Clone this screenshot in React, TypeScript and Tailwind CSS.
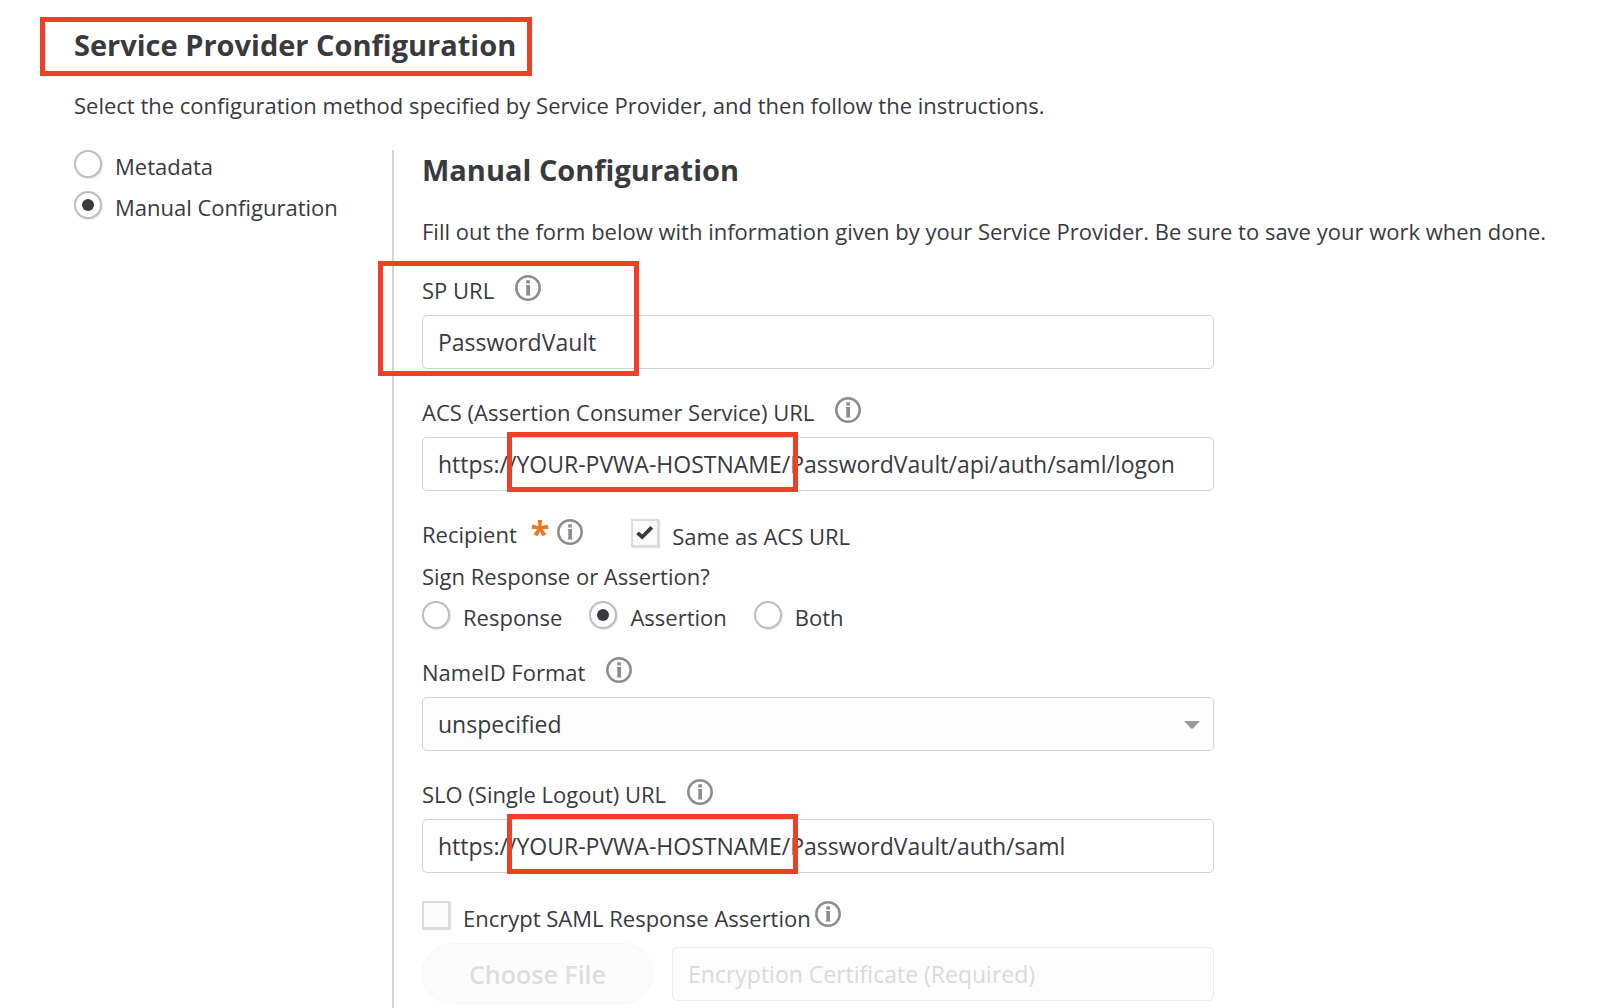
import React, { ReactNode } from "react";

function InfoButton({ label }: { label: string }) {
  return (
    <button type="button" aria-label={label} className="block size-[26px] shrink-0">
      <svg viewBox="0 0 26 26" className="size-full" aria-hidden="true">
        <circle cx="13" cy="13" r="11.7" fill="none" stroke="#8c8c8c" strokeWidth="2.500" />
        <rect x="11.2" y="5.2" width="3.8" height="3.4" rx="0.6" fill="#8c8c8c" />
        <path d="M10.8 10.1h4.200V19.600h.5v1H10.800v-1h.5v-8.500h-.5z" fill="#8c8c8c" />
      </svg>
    </button>
  );
}

function Radio({ name, label, defaultChecked }: { name: string; label: string; defaultChecked?: boolean }) {
  return (
    <label className="flex items-start gap-[13px]">
      <span className="relative block size-7 shrink-0">
        <input
          type="radio"
          name={name}
          defaultChecked={defaultChecked}
          className="peer block size-7 appearance-none rounded-full border-2 border-[#bdbdbd] bg-white shadow-[1px_1px_1px_rgba(0,0,0,0.1)]"
        />
        <span className="pointer-events-none absolute inset-2 hidden rounded-full bg-[#383a40] peer-checked:block" />
      </span>
      <span className="pt-px">{label}</span>
    </label>
  );
}

function Checkbox({ label, defaultChecked }: { label: string; defaultChecked?: boolean }) {
  return (
    <label className="flex items-start gap-[13px]">
      <span className="relative block size-7 shrink-0">
        <input
          type="checkbox"
          defaultChecked={defaultChecked}
          className="peer block size-7 appearance-none border-2 border-[#dadada] bg-[#fafafa] shadow-[1px_1px_1px_rgba(0,0,0,0.12)]"
        />
        <svg viewBox="0 0 28 28" className="pointer-events-none absolute inset-0 hidden peer-checked:block" aria-hidden="true">
          <path d="M6.500 13.800l4.700 4.200L20.800 8.300" fill="none" stroke="#383a40" strokeWidth="3.8" />
        </svg>
      </span>
      <span className="pt-0.5">{label}</span>
    </label>
  );
}

function Highlight({ className }: { className: string }) {
  return <span aria-hidden="true" className={`pointer-events-none absolute border-5 border-[#ee4026] ${className}`} />;
}

function Field({ id, label, children }: { id: string; label: string; children: ReactNode }) {
  return (
    <div className="relative mb-7">
      <div className="mb-2.5 flex items-start gap-[21px]">
        <label htmlFor={id}>{label}</label>
        <InfoButton label={`About ${label}`} />
      </div>
      {children}
    </div>
  );
}

const control = "block h-[54px] w-full rounded-[5px] border border-[#d4d4d4] px-[15px] text-[23px]";

export default function App() {
  return (
    <main className="min-h-screen bg-white pt-[17px] pl-[74px] font-['Open_Sans',sans-serif] text-[22px] leading-[30px] text-[#383a40]">
      <div className="relative w-fit pt-2 pb-[11px]">
        <Highlight className="inset-y-0 -left-[34px] -right-4" />
        <h1 className="text-[29px] leading-10 font-bold">Service Provider Configuration</h1>
      </div>
      <p className="mt-[14px]">Select the configuration method specified by Service Provider, and then follow the instructions.</p>

      <div className="mt-[30px] flex">
        <div role="radiogroup" aria-label="Configuration method" className="flex w-[318px] shrink-0 flex-col gap-2.5">
          <Radio name="method" label="Metadata" />
          <Radio name="method" label="Manual Configuration" defaultChecked />
        </div>

        <section className="min-w-0 flex-1 border-l-2 border-[#d4d4d4] pb-1 pl-7">
          <h2 className="text-[29px] leading-10 font-bold">Manual Configuration</h2>
          <p className="mt-[26px]">
            Fill out the form below with information given by your Service Provider. Be sure to save your work when done.
          </p>

          <form className="mt-[29px] max-w-[792px]">
            <Field id="sp-url" label="SP URL">
              <input id="sp-url" type="text" defaultValue="PasswordVault" className={`${control} bg-white`} />
              <Highlight className="-top-3.5 -bottom-[7px] -left-11 w-[261px]" />
            </Field>
            <Field id="acs-url" label="ACS (Assertion Consumer Service) URL">
              <input
                id="acs-url"
                type="text"
                defaultValue="https://YOUR-PVWA-HOSTNAME/PasswordVault/api/auth/saml/logon"
                className={`${control} bg-white`}
              />
              <Highlight className="top-[35px] -bottom-px left-[85px] w-[291px]" />
            </Field>

            <div className="flex items-start">
              <span>Recipient</span>
              <span className="ml-3.5 h-[30px] text-[34px] leading-7 font-bold text-[#ee7623]">*</span>
              <span className="ml-2">
                <InfoButton label="About Recipient" />
              </span>
              <span className="ml-12">
                <Checkbox label="Same as ACS URL" defaultChecked />
              </span>
            </div>
            <fieldset className="mt-2.5">
              <legend>Sign Response or Assertion?</legend>
              <div className="mt-2.5 mb-[25px] flex gap-[27px]">
                <Radio name="sign" label="Response" />
                <Radio name="sign" label="Assertion" defaultChecked />
                <Radio name="sign" label="Both" />
              </div>
            </fieldset>

            <Field id="nameid" label="NameID Format">
              <div className="relative">
                <select id="nameid" className={`${control} appearance-none bg-[#fdfdfd]`}>
                  <option>unspecified</option>
                </select>
                <svg viewBox="0 0 16 8" className="pointer-events-none absolute top-6 right-3.5 h-2 w-4" aria-hidden="true">
                  <path d="M0 0h16L9 7.500H7z" fill="#999" />
                </svg>
              </div>
            </Field>
            <Field id="slo-url" label="SLO (Single Logout) URL">
              <input
                id="slo-url"
                type="text"
                defaultValue="https://YOUR-PVWA-HOSTNAME/PasswordVault/auth/saml"
                className={`${control} bg-white`}
              />
              <Highlight className="top-[35px] -bottom-px left-[85px] w-[291px]" />
            </Field>

            <div className="flex items-start gap-1">
              <Checkbox label="Encrypt SAML Response Assertion" />
              <InfoButton label="About Encrypt SAML Response Assertion" />
            </div>
            <div className="mt-2.5 flex items-center gap-[19px]">
              <button
                type="button"
                disabled
                className="h-[61px] w-[231px] shrink-0 rounded-full border border-[#f7f7f7] bg-[#fcfcfc] text-[25px] font-semibold text-[#dcdce6]"
              >
                Choose File
              </button>
              <input
                type="text"
                disabled
                aria-label="Encryption Certificate"
                placeholder="Encryption Certificate (Required)"
                className="block h-[54px] w-full min-w-0 rounded-[5px] border border-[#ececec] bg-[#fdfdfd] px-[15px] text-[23px] placeholder:text-[#dadada]"
              />
            </div>
          </form>
        </section>
      </div>
    </main>
  );
}
